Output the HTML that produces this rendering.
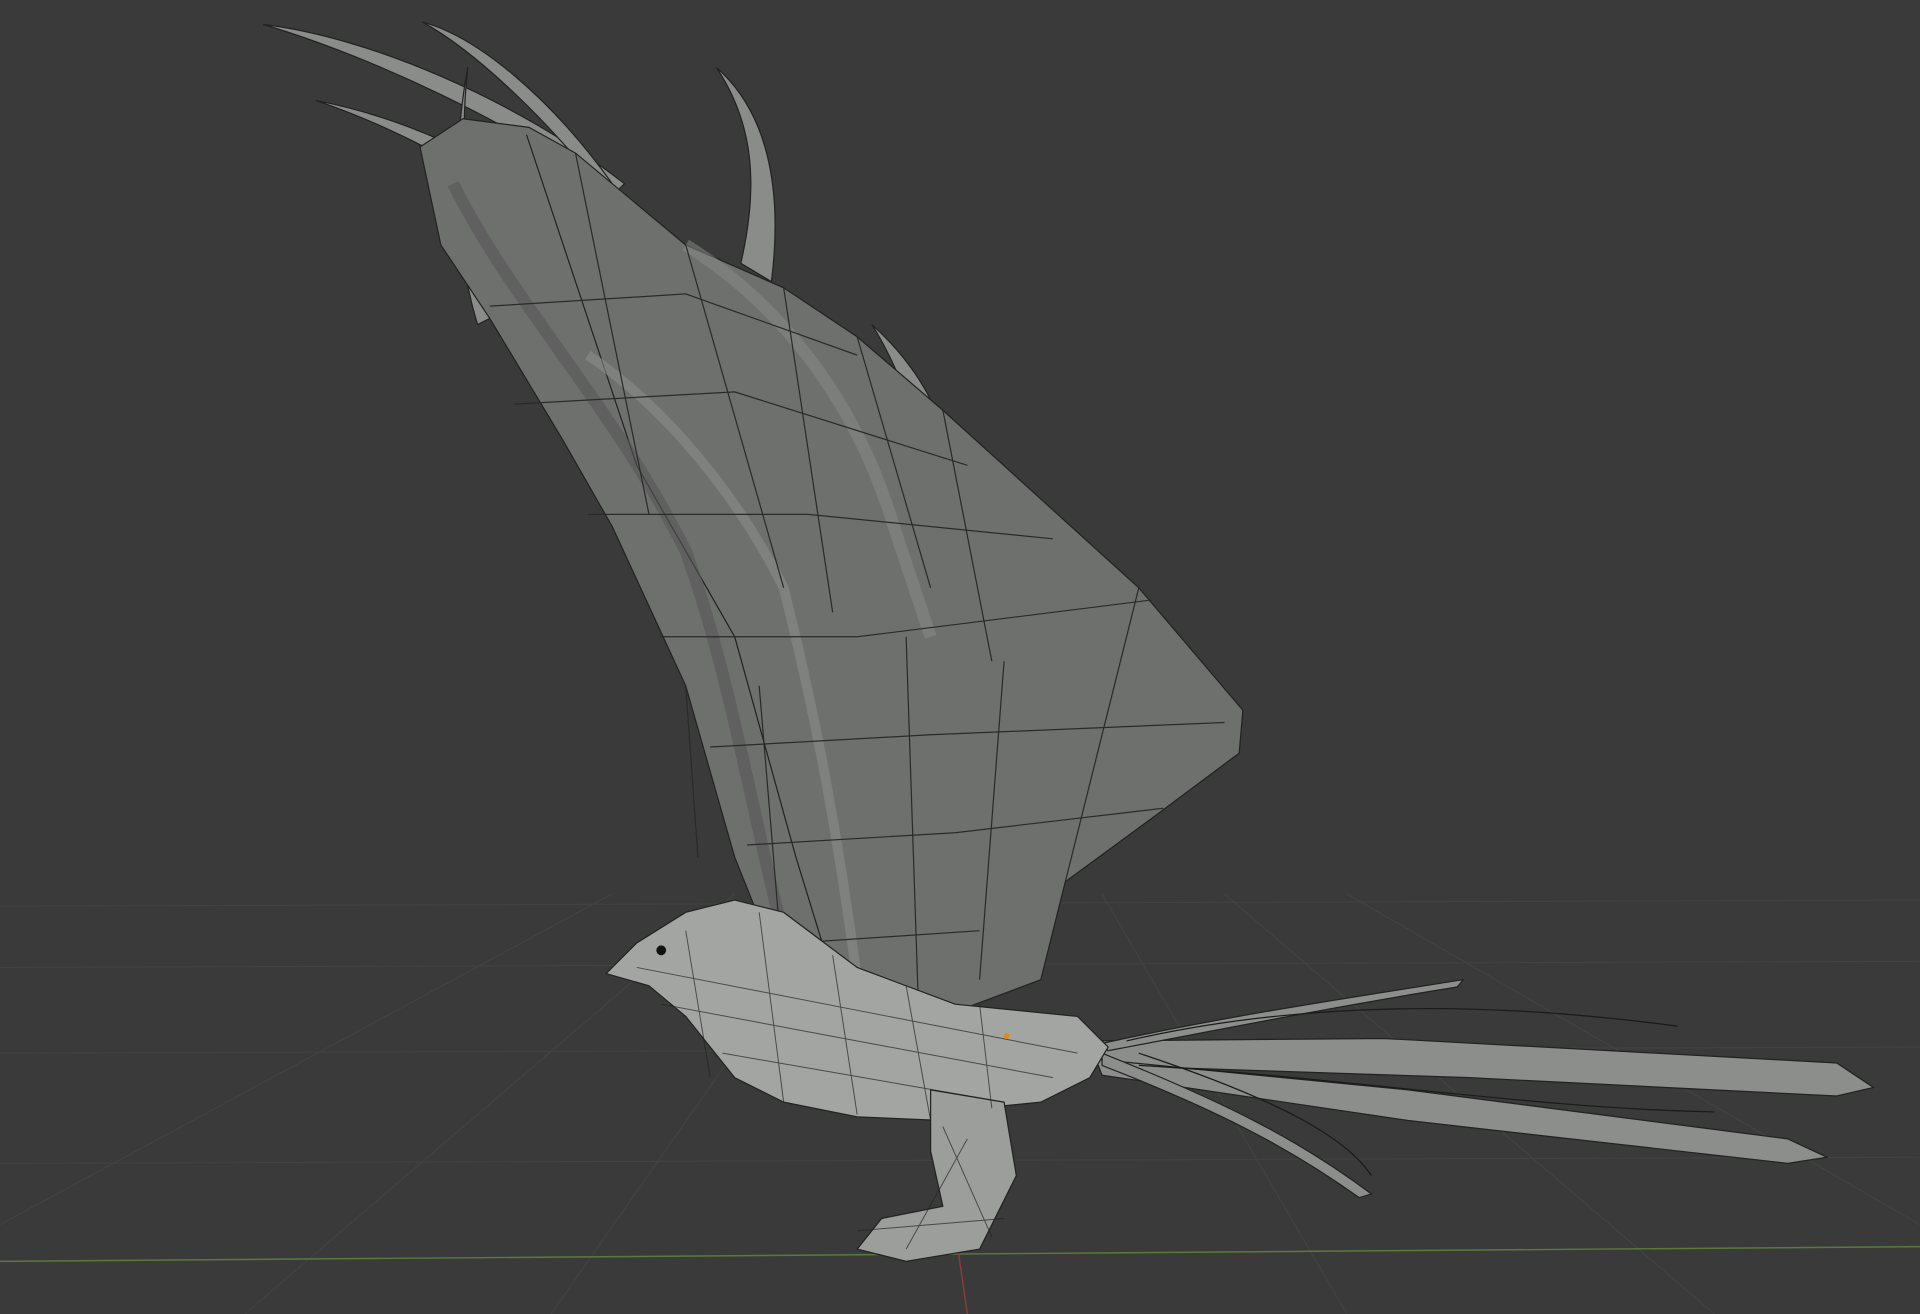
<!DOCTYPE html>
<html><head><meta charset="utf-8"><style>
html,body{margin:0;padding:0;background:#3a3a3a;overflow:hidden}
svg{display:block}
</style></head><body>
<svg width="1920" height="1314" viewBox="0 0 1568 1073" preserveAspectRatio="none" xmlns="http://www.w3.org/2000/svg">
<rect width="1568" height="1073" fill="#3a3a3a"/>
<g stroke="#444" stroke-width="1" fill="none" opacity="0.8">
<path d="M0 740 L1568 735 M0 790 L1568 785 M0 860 L1568 855 M0 950 L1568 945"/>
<path d="M200 1073 L600 730 M450 1073 L690 730 M1100 1073 L900 730 M1400 1073 L1000 730 M0 1000 L500 730 M1568 1000 L1100 730"/>
</g>
<line x1="0" y1="1030" x2="1568" y2="1018" stroke="#5a7a3a" stroke-width="1.2"/>
<line x1="778" y1="990" x2="790" y2="1073" stroke="#8a3a3a" stroke-width="1.2"/>
<!-- quills top -->
<g fill="#8a8c8a" stroke="#222" stroke-width="1">
<path d="M215 20 C300 30 420 80 510 150 L500 160 C420 100 300 45 215 20Z"/>
<path d="M345 18 C390 30 450 80 500 150 L492 155 C440 90 385 40 345 18Z"/>
<path d="M258 82 C350 100 450 150 540 240 L530 250 C440 165 340 110 258 82Z"/>
<path d="M585 55 C625 90 640 150 630 230 L605 215 C620 150 615 100 585 55Z"/>
<path d="M382 55 C375 120 380 200 400 260 L390 265 C370 200 370 120 382 55Z"/>
<path d="M712 265 C740 290 760 320 770 350 L750 350 C740 320 728 290 712 265Z"/>
</g>
<!-- main wing -->
<path d="M343 120 L378 97 L432 104 L470 125 L560 200 L640 235 L700 275 L770 335 L930 480 L1015 580 L1012 615 L945 665 L870 720 L850 800 L770 830 L700 830 L640 800 L600 700 L560 560 L500 430 L460 360 L400 260 L360 200Z" fill="#6e706e" stroke="#222" stroke-width="1"/>
<path d="M430 110 L520 380 L600 520 L650 700 L690 830" fill="none" stroke="#222" stroke-width="1"/>
<path d="M370 150 C420 250 500 330 560 450 C600 560 620 700 650 800" fill="none" stroke="#555" stroke-width="10" opacity="0.6"/>
<path d="M480 290 C540 330 600 400 640 480 C660 560 680 650 700 800" fill="none" stroke="#8a8c8a" stroke-width="8" opacity="0.6"/>
<path d="M560 200 C640 250 700 330 730 430 L760 520" fill="none" stroke="#8a8c8a" stroke-width="10" opacity="0.5"/>
<g stroke="#2a2a2a" stroke-width="1" fill="none">
<path d="M470 125 L530 420 M560 200 L640 480 M640 235 L680 500 M700 275 L760 480 M770 335 L810 540 M930 480 L870 720"/>
<path d="M400 250 L560 240 L700 290 M420 330 L600 320 L790 380 M480 420 L660 420 L860 440 M540 520 L700 520 L940 490 M580 610 L760 600 L1000 590 M610 690 L780 680 L950 660 M650 770 L800 760"/>
<path d="M560 560 L570 700 M620 560 L640 800 M740 520 L750 820 M820 540 L800 800"/>
</g>
<!-- tail -->
<g fill="#8c8e8c" stroke="#222" stroke-width="1">
<path d="M890 850 L1130 848 L1500 868 L1530 888 L1500 895 L1200 880 L900 870Z"/>
<path d="M895 865 L1150 890 L1460 930 L1492 945 L1460 950 L1150 915 L900 878Z"/>
<path d="M900 860 C1000 900 1060 930 1120 975 L1110 978 C1050 935 990 905 900 870Z"/>
<path d="M900 852 C1000 830 1100 815 1195 800 L1190 806 C1090 822 1000 840 905 858Z"/>
</g>
<g stroke="#1a1a1a" stroke-width="1" fill="none">
<path d="M920 850 C1050 820 1200 815 1370 838 M930 870 C1100 880 1250 905 1400 908 M930 860 C1050 900 1100 930 1120 960"/>
</g>
<!-- body -->
<path d="M495 795 L520 770 L560 745 L600 735 L640 745 L700 790 L780 820 L880 830 L905 855 L890 880 L850 900 L800 905 L770 915 L700 912 L640 900 L600 880 L560 830 L530 805Z" fill="#a3a5a3" stroke="#222" stroke-width="1"/>
<!-- leg -->
<path d="M760 890 L820 900 L830 960 L800 1020 L740 1030 L700 1020 L720 995 L770 985 L760 940Z" fill="#9c9e9c" stroke="#222" stroke-width="1"/>
<g stroke="#222" stroke-width="0.8" fill="none" opacity="0.7">
<path d="M560 760 L580 880 M620 745 L640 900 M680 780 L700 910 M740 805 L760 915 M800 820 L810 905 M520 790 L880 860 M540 820 L860 880 M590 860 L820 900"/>
<path d="M770 920 L810 1010 M790 930 L740 1020 M700 1005 L820 995"/>
</g>
<circle cx="540" cy="776" r="4" fill="#111"/>
<circle cx="822" cy="846" r="2.5" fill="#e08a1a"/>
</svg>
</body></html>
